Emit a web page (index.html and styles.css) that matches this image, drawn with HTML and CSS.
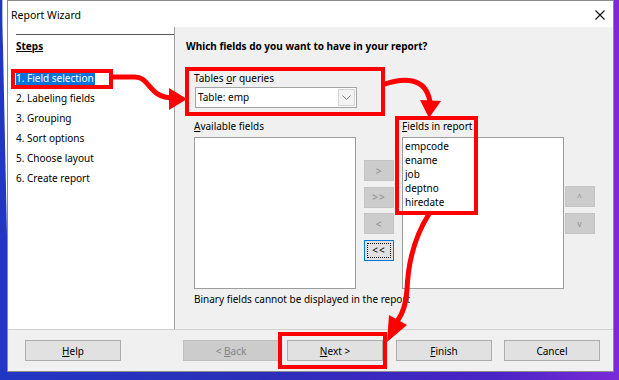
FILE: index.html
```html
<!DOCTYPE html>
<html>
<head>
<meta charset="utf-8">
<title>Report Wizard</title>
<link rel="stylesheet" href="styles.css">
</head>
<body>
<div class="window">
  <div class="titlebar">
    <span class="title">Report Wizard</span>
    <svg class="close" width="10" height="10" viewBox="0 0 10 10"><path d="M0.5 0.5L9.5 9.5M9.5 0.5L0.5 9.5" stroke="#111" stroke-width="1.1" fill="none"/></svg>
  </div>
  <div class="main">
    <div class="steps">
      <div class="steps-head"><span class="steps-title">Steps</span></div>
      <ul class="step-list">
        <li class="step active"><span>1. Field selection</span></li>
        <li class="step"><span>2. Labeling fields</span></li>
        <li class="step"><span>3. Grouping</span></li>
        <li class="step"><span>4. Sort options</span></li>
        <li class="step"><span>5. Choose layout</span></li>
        <li class="step"><span>6. Create report</span></li>
      </ul>
    </div>
    <div class="content">
      <div class="question">Which fields do you want to have in your report?</div>
      <div class="tables">
        <div class="label">Tables <u>o</u>r queries</div>
        <div class="dropdown">
          <span class="dd-value">Table: emp</span>
          <span class="dd-btn"><svg width="9" height="6" viewBox="0 0 9 6"><path d="M0.5 0.5L4.5 4.5L8.5 0.5" stroke="#777" fill="none" stroke-width="1"/></svg></span>
        </div>
      </div>
      <div class="fields">
        <div class="field-col">
          <div class="label"><u>A</u>vailable fields</div>
          <div class="listbox"></div>
        </div>
        <div class="move-btns">
          <div class="sbtn disabled"><span>&gt;</span></div>
          <div class="sbtn disabled"><span>&gt;&gt;</span></div>
          <div class="sbtn disabled"><span>&lt;</span></div>
          <div class="sbtn focus"><span class="focus-ring">&lt;&lt;</span></div>
        </div>
        <div class="field-col">
          <div class="label"><u>F</u>ields in report</div>
          <div class="listbox">
            <div class="item">empcode</div>
            <div class="item">ename</div>
            <div class="item">job</div>
            <div class="item">deptno</div>
            <div class="item">hiredate</div>
          </div>
        </div>
        <div class="order-btns">
          <div class="sbtn disabled small"><span>^</span></div>
          <div class="sbtn disabled small"><span>v</span></div>
        </div>
      </div>
      <div class="note">Binary fields cannot be displayed in the report</div>
    </div>
  </div>
  <div class="buttonbar">
    <div class="btn btn-help"><span><u>H</u>elp</span></div>
    <div class="btn btn-back disabled"><span>&lt; <u>B</u>ack</span></div>
    <div class="btn btn-next"><span><u>N</u>ext &gt;</span></div>
    <div class="btn btn-finish"><span><u>F</u>inish</span></div>
    <div class="btn btn-cancel"><span>Cancel</span></div>
  </div>
</div>
<svg class="annotations" width="619" height="380" viewBox="0 0 619 380">
  <g fill="none" stroke="#ff0000" stroke-width="4">
    <rect x="13" y="71" width="98" height="16"/>
    <rect x="187" y="69" width="196" height="45"/>
    <rect x="397" y="118" width="79" height="95"/>
    <rect x="280" y="334" width="105" height="33"/>
  </g>
  <g fill="none" stroke="#ff0000" stroke-width="5" stroke-linecap="round">
    <path d="M113 77 L135 77 C150 77 148 97 172 98"/>
    <path d="M385 84 C402 78 426 76 430 102"/>
    <path d="M429 214 C415 236 408 262 407 290 C406 304 403 313 398 320"/>
  </g>
  <g fill="#ff0000">
    <polygon points="169,88 187,99 169,110"/>
    <polygon points="420,100 441,101 429,118"/>
    <polygon points="389,315 407,325 387,342"/>
  </g>
</svg>
</body>
</html>
```
FILE: styles.css
```css
* { box-sizing: border-box; }

body {
  margin: 0;
  width: 619px;
  height: 380px;
  overflow: hidden;
  position: relative;
  background: linear-gradient(90deg, #2236c4 0%, #2a2fb8 40%, #4a24c6 80%, #7a2ad6 100%);
  font-family: "Noto Sans", "Open Sans", sans-serif;
  font-size: 10px;
  color: #000;
}

body::before {
  content: "";
  position: absolute;
  left: 2px;
  top: 0;
  width: 6px;
  height: 330px;
  background: #fff;
  border-left: 1px solid #b8b8c8;
  clip-path: polygon(0 0, 100% 0, 100% 100%);
}

.window {
  position: relative;
  margin-left: 7px;
  width: 607px;
  height: 372px;
  border: 1px solid #8c8c8c;
  background: #f0f0f0;
  display: flex;
  flex-direction: column;
}

.titlebar {
  height: 26px;
  background: #fff;
  display: flex;
  align-items: center;
  padding: 0 8px 0 3px;
}

.title {
  flex: 1;
  line-height: 16px;
  padding-top: 1px;
  font-size: 10.5px;
}

.close {
  margin-top: 1px;
}

.main {
  height: 302px;
  display: flex;
}

.steps {
  width: 167px;
  background: #fff;
  border-right: 1px solid #a0a0a0;
  padding: 7px 0 0 8px;
}

.steps-head {
  border-top: 1px solid #555;
  padding-top: 3px;
  line-height: 16px;
}

.steps-title {
  font-weight: bold;
  text-decoration: underline;
}

.step-list {
  list-style: none;
  margin: 14px 0 0;
  padding: 0;
}

.step {
  height: 20px;
  display: flex;
  align-items: center;
}

.step span {
  line-height: 14px;
  padding: 0 1px 0 0;
}

.step.active span {
  background: #0a74da;
  color: #fff;
}

.content {
  flex: 1;
  padding: 11px 0 0 11px;
  background: #f0f0f0;
}

.question {
  font-weight: bold;
  line-height: 16px;
}

.label {
  line-height: 16px;
}

.tables {
  margin: 16px 0 0 8px;
}

.dropdown {
  margin: 1px 0 0 1px;
  width: 162px;
  height: 21px;
  border: 1px solid #a5a5a5;
  background: #fff;
  display: flex;
  align-items: stretch;
}

.dd-value {
  flex: 1;
  padding-left: 2px;
  line-height: 19px;
}

.dd-btn {
  width: 17px;
  margin: 1px;
  border: 1px solid #d4d4d4;
  background: #f3f3f3;
  display: flex;
  align-items: center;
  justify-content: center;
}

.fields {
  margin: 10px 0 0 8px;
  display: flex;
}

.field-col {
  width: 162px;
}

.listbox {
  margin-top: 3px;
  height: 152px;
  border: 1px solid #9c9c9c;
  background: #fff;
  padding: 1px 0 0 2px;
}

.item {
  line-height: 14px;
}

.move-btns {
  width: 30px;
  margin: 0 8px;
  padding-top: 42px;
  display: flex;
  flex-direction: column;
  gap: 5.5px;
}

.order-btns {
  width: 30px;
  margin-left: 1px;
  padding-top: 68px;
  display: flex;
  flex-direction: column;
  gap: 6px;
}

.sbtn {
  height: 21px;
  display: flex;
  align-items: center;
  justify-content: center;
  font-size: 10px;
  letter-spacing: 1px;
}

.sbtn.disabled {
  background: #cccccc;
  border: 1px solid #c4c4c4;
  color: #8a8a8a;
}

.sbtn.small {
  font-size: 8px;
}

.sbtn.focus {
  background: #e1e1e1;
  border: 1px solid #0078d7;
  padding: 2px;
}

.focus-ring {
  width: 100%;
  height: 100%;
  border: 1px dotted #000;
  display: flex;
  align-items: center;
  justify-content: center;
  line-height: 12px;
}

.note {
  margin: 2px 0 0 8px;
  line-height: 16px;
}

.buttonbar {
  flex: 1;
  border-top: 1px solid #d0d0d0;
  display: flex;
  align-items: flex-start;
  padding: 10px 0 0 17px;
}

.btn {
  width: 96px;
  height: 21px;
  background: #e1e1e1;
  border: 1px solid #adadad;
  display: flex;
  align-items: center;
  justify-content: center;
  line-height: 14px;
}

.btn.disabled {
  background: #cccccc;
  border-color: #bfbfbf;
  color: #838383;
}

.btn-back { margin-left: 62px; }
.btn-next { margin-left: 8px; }
.btn-finish { margin-left: 13px; }
.btn-cancel { margin-left: 12px; }

.annotations {
  position: absolute;
  left: 0;
  top: 0;
  pointer-events: none;
}
```
